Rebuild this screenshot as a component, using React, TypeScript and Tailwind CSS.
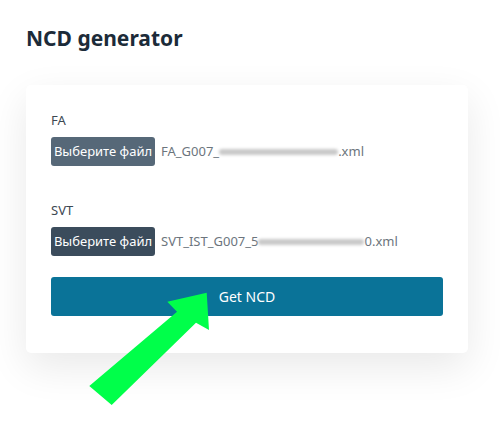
export default function App() {
  return (
    <div
      className="relative min-h-[440px] w-[500px] bg-white px-[26px] pt-[22px]"
      style={{ fontFamily: '"Noto Sans", "Open Sans", sans-serif' }}
    >
      <h1 className="text-[21px] font-bold leading-[32px] text-[#1c2b39]">NCD generator</h1>

      <div className="mt-[31px] w-[442px] rounded-[5px] bg-white px-[25px] pt-[25px] pb-[37px] shadow-[0_14px_40px_rgba(0,0,0,0.09)]">
        {/* FA */}
        <label className="block text-[13px] leading-[21px] text-[#3d4852]">FA</label>
        <div className="mt-[6px] flex items-center">
          <span className="flex h-[29px] w-[104px] items-center justify-center whitespace-nowrap rounded-[3px] bg-[#566878] text-[13px] text-white">
            Выберите файл
          </span>
          <span className="ml-[6px] flex items-center whitespace-nowrap text-[13px] text-[#6c757d]">
            FA_G007_
            <span className="inline-block h-[6px] w-[119px] rounded-full bg-[#c9c9c9] blur-[1.5px]" />
            .xml
          </span>
        </div>

        {/* SVT */}
        <label className="mt-[34px] block text-[13px] leading-[21px] text-[#3d4852]">SVT</label>
        <div className="mt-[6px] flex items-center">
          <span className="flex h-[29px] w-[104px] items-center justify-center whitespace-nowrap rounded-[3px] bg-[#3b4c5c] text-[13px] text-white">
            Выберите файл
          </span>
          <span className="ml-[6px] flex items-center whitespace-nowrap text-[13px] text-[#6c757d]">
            SVT_IST_G007_5
            <span className="inline-block h-[6px] w-[106px] rounded-full bg-[#c9c9c9] blur-[1.5px]" />
            0.xml
          </span>
        </div>

        <button className="mt-[21px] flex h-[39px] w-full items-center justify-center rounded-[3px] bg-[#0a7398] text-[14px] text-white">
          Get NCD
        </button>
      </div>

      {/* annotation arrow */}
      <svg className="pointer-events-none absolute left-0 top-0" width="500" height="440">
        <polygon
          points="206.7,292.7 209,330 196,322.7 111.7,405 89.3,386 177,311.7 167.3,301.7"
          fill="#00ff4a"
        />
      </svg>
    </div>
  );
}
